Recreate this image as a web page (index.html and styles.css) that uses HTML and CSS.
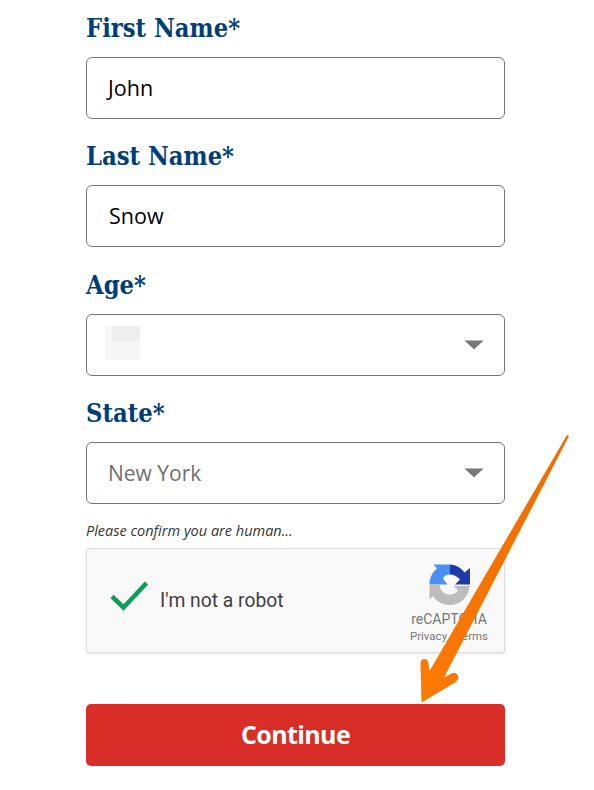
FILE: index.html
```html
<!DOCTYPE html>
<html lang="en">
<head>
<meta charset="utf-8">
<title>Form</title>
<link rel="stylesheet" href="styles.css">
</head>
<body>
<form class="form">
  <div class="field">
    <label class="label">First Name*</label>
    <div class="control"><span class="value first">John</span></div>
  </div>
  <div class="field">
    <label class="label">Last Name*</label>
    <div class="control"><span class="value">Snow</span></div>
  </div>
  <div class="field">
    <label class="label">Age*</label>
    <div class="control select">
      <span class="redacted"><span class="redacted-dark"></span></span>
      <svg class="caret" width="20" height="10" viewBox="0 0 20 10"><path d="M0.5 0.5H19.5L10 9.5Z" fill="#777"/></svg>
    </div>
  </div>
  <div class="field">
    <label class="label">State*</label>
    <div class="control select">
      <span class="value muted">New York</span>
      <svg class="caret" width="20" height="10" viewBox="0 0 20 10"><path d="M0.5 0.5H19.5L10 9.5Z" fill="#777"/></svg>
    </div>
  </div>
  <p class="hint">Please confirm you are human...</p>
  <div class="captcha">
    <svg class="check" width="42" height="32" viewBox="0 0 42 32"><path d="M3 16.5L14.500 27.500L37.500 3" fill="none" stroke="#0f9d58" stroke-width="4.500"/></svg>
    <span class="robot">I'm not a robot</span>
    <div class="brand">
      <svg class="logo" width="42" height="42" viewBox="0 0 42 42">
        <path d="M20.500 0.500V10.500C17.500 10.500 15.200 12 13.800 14.500L18.500 20.500H0.500C0.500 13.500 3.500 8 8 4.500L4.500 0.500Z" fill="#4a90f2"/>
        <path d="M20.500 0.500C26.500 0.500 32 3.500 35.500 8.500L41 4V20.500H26L31 15.500C28.500 12.500 25 10.500 20.500 10.500Z" fill="#1c3aa9"/>
        <path d="M0.500 20.500H10.500C11 26.500 15 30.500 20.500 30.500C24 30.500 27 29 29 26.500L24.500 22H40.500C40 33 31.500 41 20.500 41C13.500 41 7.500 37.500 4 32L0.500 35.500Z" fill="#bdbdbd"/>
      </svg>
      <span class="brand-name">reCAPTCHA</span>
      <span class="brand-links">Privacy - Terms</span>
    </div>
  </div>
  <button class="submit" type="button">Continue</button>
</form>
<svg class="arrow" width="594" height="790" viewBox="0 0 594 790">
  <defs>
    <linearGradient id="shade" x1="0" y1="0" x2="1" y2="0">
      <stop offset="0" stop-color="#ff7a00"/>
      <stop offset="1" stop-color="#ee6c00"/>
    </linearGradient>
  </defs>
  <path d="M569 436L567 435L429.500 671L428.500 664Q428 659 424.500 659Q420.500 659 420.500 664L421.500 702.500L455 682.500Q459.500 679.500 458 675.500Q456 671.500 451.500 673.500L444 677.500Z" fill="url(#shade)"/>
</svg>
</body>
</html>
```
FILE: styles.css
```css
* { box-sizing: border-box; }
html, body { margin: 0; padding: 0; background: #fff; }
body { width: 594px; height: 790px; overflow: hidden; position: relative; font-family: "Open Sans", "Noto Sans", sans-serif; }
.form { width: 419px; margin-left: 86px; display: flex; flex-direction: column; }
.field { height: 128.33px; display: flex; flex-direction: column; }
.label { height: 57px; line-height: 57px; font-family: "DejaVu Serif Condensed", "DejaVu Serif", serif; font-weight: 700; font-size: 25.300px; color: #003e78; white-space: nowrap; }
.control { height: 62px; border: 1px solid #757575; border-radius: 6px; display: flex; align-items: center; justify-content: space-between; padding: 0 20px 0 22px; background: #fff; }
.value { font-size: 21.500px; line-height: 30px; color: #000; }
.value.first { margin-left: -1px; }
.value.muted { font-size: 21px; color: #6f6f6f; margin-left: -1px; }
.redacted { display: block; width: 35px; height: 34px; margin: -4px 0 0 -4px; background: #f7f7f7; padding-left: 7px; }
.redacted-dark { display: block; width: 28px; height: 16px; background: #eee; }
.caret { display: block; }
.hint { margin: -1px 0 0; height: 36px; font-size: 14.500px; line-height: 38px; font-style: italic; color: #333; white-space: nowrap; }
.captcha { height: 105px; background: #f9f9f9; border: 1px solid #dedede; border-radius: 3px; box-shadow: 0 1px 3px rgba(0,0,0,.12); display: flex; align-items: center; padding: 0 15px 0 22px; }
.check { display: block; margin-top: -10px; }
.robot { margin-left: 9px; font-family: Roboto, sans-serif; font-size: 19.300px; color: #3f3f3f; }
.brand { margin: 7px 0 0 auto; width: 80px; display: flex; flex-direction: column; align-items: center; font-family: Roboto, sans-serif; color: #777; }
.logo { display: block; margin: 0 0 5px 2px; }
.brand-name { font-size: 14px; line-height: 17px; white-space: nowrap; }
.brand-links { font-size: 11.500px; line-height: 16px; white-space: nowrap; }
.submit { margin-top: 51px; height: 62px; width: 419px; border: 0; border-radius: 5px; background: #d92d27; color: #fff; font-family: "Open Sans", sans-serif; font-weight: 700; font-size: 25px; letter-spacing: -0.600px; padding: 0 0 2px; }
.arrow { position: absolute; left: 0; top: 0; pointer-events: none; }
```
